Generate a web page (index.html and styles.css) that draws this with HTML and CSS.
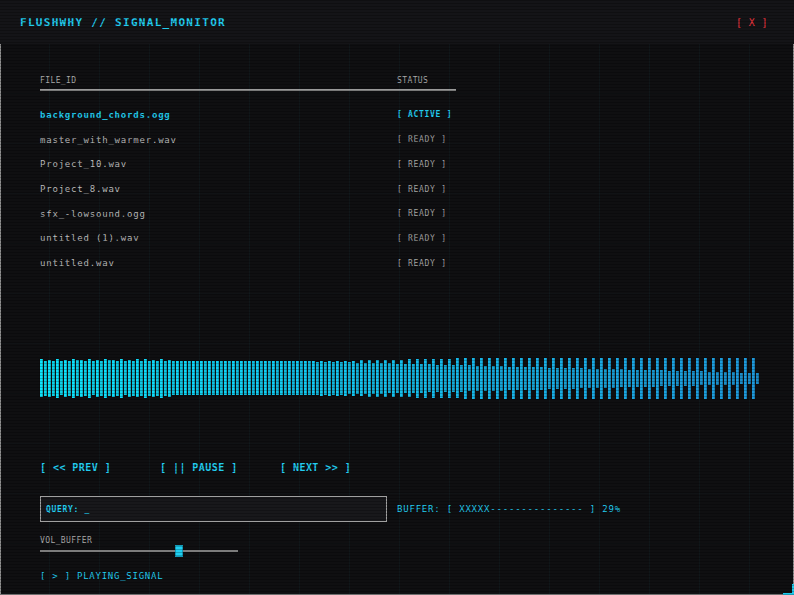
FILE: index.html
```html
<!DOCTYPE html>
<html lang="en">
<head>
    <meta charset="UTF-8">
    <meta name="viewport" content="width=device-width, initial-scale=1.0">
    <title>FLUSHWHY // SIGNAL_MONITOR</title>
    <link rel="stylesheet" href="styles.css">
</head>
<body>

    <div class="monitor">
        <div class="topbar">
            <div class="title">FLUSHWHY // SIGNAL_MONITOR</div>
            <div class="close">[ X ]</div>
        </div>

        <div class="panel">
            <div class="files">
                <div class="files-head">
                    <span class="col-name">FILE_ID</span>
                    <span class="col-status">STATUS</span>
                </div>
                <div class="file-row active">
                    <span class="col-name">background_chords.ogg</span>
                    <span class="col-status">[ ACTIVE ]</span>
                </div>
                <div class="file-row">
                    <span class="col-name">master_with_warmer.wav</span>
                    <span class="col-status">[ READY ]</span>
                </div>
                <div class="file-row">
                    <span class="col-name">Project_10.wav</span>
                    <span class="col-status">[ READY ]</span>
                </div>
                <div class="file-row">
                    <span class="col-name">Project_8.wav</span>
                    <span class="col-status">[ READY ]</span>
                </div>
                <div class="file-row">
                    <span class="col-name">sfx_-lowsound.ogg</span>
                    <span class="col-status">[ READY ]</span>
                </div>
                <div class="file-row">
                    <span class="col-name">untitled (1).wav</span>
                    <span class="col-status">[ READY ]</span>
                </div>
                <div class="file-row">
                    <span class="col-name">untitled.wav</span>
                    <span class="col-status">[ READY ]</span>
                </div>
            </div>

            <div class="wave" id="wave"></div>

            <div class="controls">
                <span class="ctrl">[ &lt;&lt; PREV ]</span>
                <span class="ctrl">[ || PAUSE ]</span>
                <span class="ctrl">[ NEXT &gt;&gt; ]</span>
            </div>

            <div class="query-row">
                <div class="query-box">QUERY: _</div>
                <div class="buffer">BUFFER: [ XXXXX--------------- ] 29%</div>
            </div>

            <div class="vol-label">VOL_BUFFER</div>
            <div class="slider">
                <div class="slider-thumb"></div>
            </div>

            <div class="status-line">[ &gt; ] PLAYING_SIGNAL</div>
        </div>
    </div>

    <script>
        // waveform bars: alternating tall / short, the short ones fade out to the right
        const wave = document.getElementById('wave');
        const barCount = 180;

        for (let i = 0; i < barCount; i++) {
            const t = i / (barCount - 1);
            const tall = i % 2 === 0;
            let h;

            if (tall) {
                if (t < 0.18) h = 38 + 1.5 * Math.sin(i * 1.7);
                else if (t < 0.38) h = 34;
                else h = Math.min(41, 34 + (t - 0.38) * 30);
            } else {
                if (t < 0.18) h = 35 + Math.sin(i * 2.3);
                else if (t < 0.38) h = 34;
                else h = 34 - (t - 0.38) / 0.62 * 23;
            }

            const r = Math.round(14 + 16 * t);
            const g = Math.round(228 - 76 * t);
            const b = Math.round(252 - 34 * t);

            const bar = document.createElement('div');
            bar.className = tall ? 'bar' : 'bar bar-short';
            bar.style.height = h.toFixed(1) + 'px';
            bar.style.backgroundColor = 'rgb(' + r + ',' + g + ',' + b + ')';
            wave.appendChild(bar);
        }
    </script>

</body>
</html>
```

FILE: styles.css
```css
body {
    margin: 0;
    background-color: #111113;
    font-family: 'DejaVu Sans Mono', 'Liberation Mono', monospace;
    color: #b4b4b4;
}

/* CRT scanlines over everything */
body::after {
    content: "";
    position: fixed;
    inset: 0;
    pointer-events: none;
    background: repeating-linear-gradient(
        to bottom,
        rgba(0, 0, 0, 0.22) 0px,
        rgba(0, 0, 0, 0.22) 1px,
        transparent 1px,
        transparent 3px
    );
}

.monitor {
    width: 794px;
    height: 595px;
    display: flex;
    flex-direction: column;
}

.topbar {
    height: 44px;
    flex-shrink: 0;
    display: flex;
    align-items: center;
    justify-content: space-between;
    padding: 0 26px 0 20px;
    background-color: #141417;
}

.title {
    font-size: 11px;
    font-weight: bold;
    letter-spacing: 1.3px;
    color: #22cdf0;
}

.close {
    font-size: 10px;
    letter-spacing: 0.4px;
    color: #f0343f;
}

.panel {
    position: relative;
    flex: 1;
    box-sizing: border-box;
    border: 1px solid #8f8f8f;
    border-top: none;
    padding: 32px 39px 0 39px;
    background-color: #0f0f11;
    background-image:
        linear-gradient(90deg, rgba(40, 170, 190, 0.05) 1px, transparent 1px),
        linear-gradient(0deg, rgba(40, 170, 190, 0.02) 1px, transparent 1px);
    background-size: 50px 50px;
    background-position: 48px 0;
}

.panel::after {
    content: "";
    position: absolute;
    right: -1px;
    bottom: -1px;
    width: 9px;
    height: 9px;
    border-right: 2px solid #1ec8ea;
    border-bottom: 2px solid #1ec8ea;
}

.files {
    width: 416px;
}

.files-head {
    display: flex;
    font-size: 8px;
    line-height: 10px;
    letter-spacing: 0.4px;
    color: #a8a8a8;
    padding-bottom: 3px;
    border-bottom: 2px solid #9a9a9a;
    margin-bottom: 11.6px;
}

.col-name {
    width: 357px;
    flex-shrink: 0;
}

.file-row {
    display: flex;
    align-items: center;
    height: 24.7px;
    font-size: 9px;
    letter-spacing: 0.8px;
    color: #bcbcbc;
}

.file-row .col-status {
    font-size: 8px;
    letter-spacing: 0.7px;
    color: #a4a4a4;
}

.file-row.active .col-name,
.file-row.active .col-status {
    color: #22cdf0;
    font-weight: bold;
}

.wave {
    margin-top: 80px;
    height: 46px;
    display: flex;
    align-items: center;
    gap: 1px;
}

.bar {
    width: 3px;
    flex-shrink: 0;
    box-shadow: inset -1px 0 rgba(0, 0, 0, 0.18), 0 0 1px #000;
}

.bar-short {
    opacity: 0.9;
}

.controls {
    margin-top: 61px;
    display: flex;
    font-size: 10px;
    line-height: 12px;
    font-weight: bold;
    letter-spacing: 0.45px;
    color: #22cdf0;
}

.ctrl {
    width: 120px;
}

.query-row {
    margin-top: 22px;
    display: flex;
    align-items: center;
}

.query-box {
    width: 347px;
    height: 26px;
    box-sizing: border-box;
    border: 1px solid #a0a0a0;
    background-color: #18181b;
    padding-left: 5px;
    display: flex;
    align-items: center;
    font-size: 8px;
    font-weight: bold;
    letter-spacing: 0.7px;
    color: #22cdf0;
}

.buffer {
    margin-left: 10px;
    font-size: 9px;
    letter-spacing: 0.8px;
    color: #22cdf0;
}

.vol-label {
    margin-top: 15px;
    font-size: 8px;
    line-height: 8px;
    letter-spacing: 0.4px;
    color: #a8a8a8;
}

.slider {
    position: relative;
    width: 198px;
    height: 12px;
    background: linear-gradient(to bottom, transparent 5px, #7c7c7c 5px, #7c7c7c 7px, transparent 7px);
}

.slider-thumb {
    position: absolute;
    left: 135px;
    top: 0;
    width: 8px;
    height: 12px;
    box-sizing: border-box;
    background-color: #1ed0f2;
    border: 1px solid #139ab8;
}

.status-line {
    margin-top: 13px;
    font-size: 9px;
    line-height: 12px;
    letter-spacing: 0.75px;
    color: #22cdf0;
}
```
